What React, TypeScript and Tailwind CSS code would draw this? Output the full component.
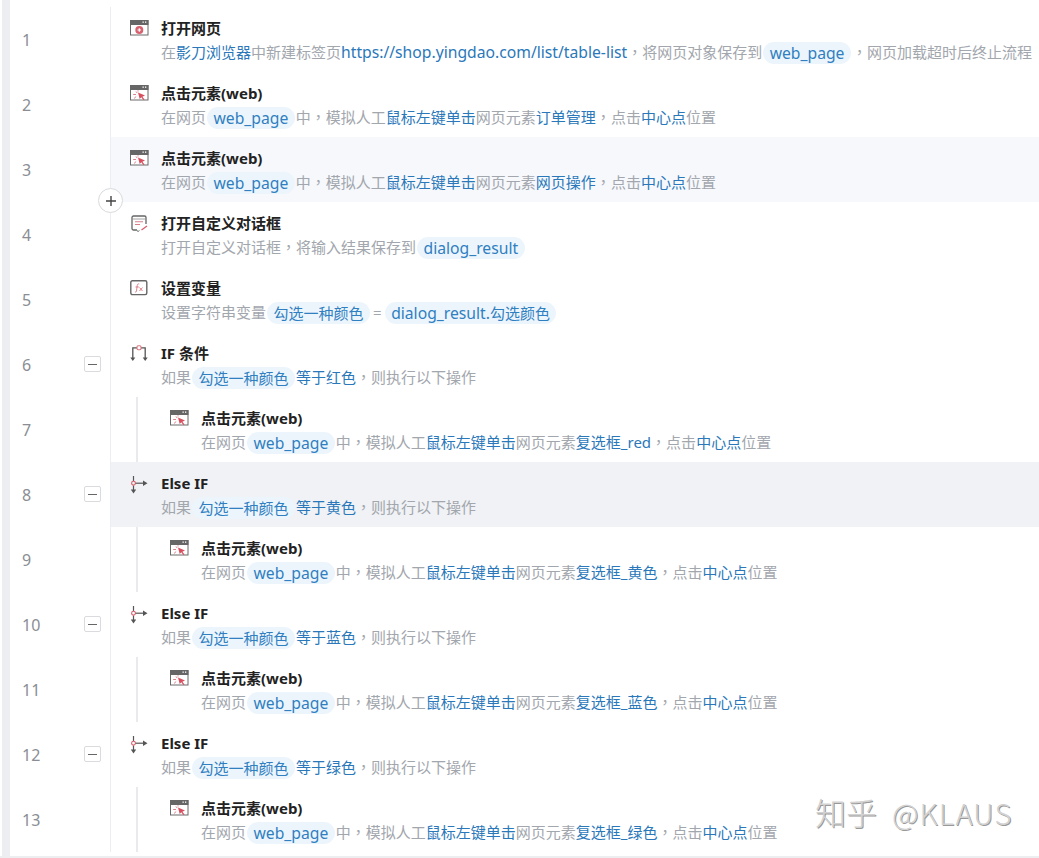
import React from "react";

type Seg = { t: string; k?: "b" | "u" | "p" };
const b = (t: string): Seg => ({ t, k: "b" });
const u = (t: string): Seg => ({ t, k: "u" });
const p = (t: string): Seg => ({ t, k: "p" });

function WinFrame({ children }: { children: React.ReactNode }) {
  return (
    <svg width="19" height="16" viewBox="0 0 19 16" fill="none">
      <rect x="0.500" y="0.500" width="17.500" height="14.500" stroke="#6a6a6a" fill="#fff" />
      <rect x="0.500" y="0.500" width="17.500" height="4" fill="#666" stroke="#666" />
      <rect x="12.500" y="1.500" width="1.300" height="1.300" fill="#fff" />
      <rect x="15" y="1.500" width="1.300" height="1.300" fill="#fff" />
      {children}
    </svg>
  );
}

function IconOpen() {
  return (
    <WinFrame>
      <circle cx="9.300" cy="10" r="4" fill="#d9606e" />
      <path d="M7.500 10h3.600M9.300 8.200v3.600" stroke="#fff" strokeWidth="1.200" />
    </WinFrame>
  );
}

function IconClick() {
  return (
    <WinFrame>
      <path d="M8 7.500l7 3-2.600 1.200 2.200 2.800-1.300.5-2-2.700-1.600 1.800z" fill="#d8505f" />
      <path d="M6 6.500l1.200 1.500M3.200 9.500h2.800M4 13.500l2.200-2M8 5.200v1.300" stroke="#d9737f" strokeWidth="0.900" />
    </WinFrame>
  );
}

function IconDialog() {
  return (
    <svg width="19" height="18" viewBox="0 0 19 18" fill="none">
      <path d="M7 15H3.500A1.500 1.500 0 0 1 2 13.500V2.500A1.500 1.500 0 0 1 3.500 1h11A1.500 1.500 0 0 1 16 2.500V9" stroke="#666" strokeWidth="1.300" />
      <path d="M2.500 4h13" stroke="#888" strokeWidth="0.800" />
      <path d="M5 6.800h8M5 9.500h5" stroke="#dc7f8b" strokeWidth="1.100" />
      <path d="M11.500 15l5.500-4" stroke="#d9606e" strokeWidth="1.300" />
      <path d="M7 15l1 2 1.500-2" stroke="#888" strokeWidth="0.900" />
    </svg>
  );
}

function IconVar() {
  return (
    <svg width="18" height="16" viewBox="0 0 18 16" fill="none">
      <rect x="0.800" y="0.800" width="16" height="13.800" rx="1.500" stroke="#666" strokeWidth="1.400" />
      <path d="M9.200 4c-1.300-.5-1.800.4-2 1.600L6.500 11c-.2 1-.8 1.200-1.500.8M5.500 7h3.300" stroke="#d9737f" strokeWidth="0.900" />
      <path d="M9.500 7.500l3 3.500M12.500 7.500l-3 3.500" stroke="#d9737f" strokeWidth="0.900" />
    </svg>
  );
}

function IconIf() {
  return (
    <svg width="18" height="18" viewBox="0 0 18 18" fill="none">
      <path d="M7 2.800H2.800V13M11 2.800h4.200V13" stroke="#555" strokeWidth="1.300" />
      <path d="M0.300 12.500h5L2.800 16zM12.700 12.500h5l-2.500 3.500z" fill="#555" />
      <rect x="7" y="0.800" width="4" height="4" rx="1.200" stroke="#d9737f" strokeWidth="1.100" fill="#fff" />
    </svg>
  );
}

function IconElse() {
  return (
    <svg width="18" height="20" viewBox="0 0 18 20" fill="none">
      <path d="M3.500 1v5M3.500 10.500V15" stroke="#555" strokeWidth="1.200" />
      <path d="M0.800 14.500h5.400L3.500 18.500z" fill="#555" />
      <circle cx="3.500" cy="8.200" r="1.900" stroke="#d9606e" strokeWidth="1.100" fill="none" />
      <path d="M5.500 8.200h8" stroke="#555" strokeWidth="1.200" />
      <path d="M13 5.500L17.500 8.200 13 11z" fill="#555" />
    </svg>
  );
}

function Plain({ t }: { t: string }) {
  const parts = t.split("，");
  return (
    <>
      {parts.map((x, i) => (
        <React.Fragment key={i}>
          {i > 0 && <span className="font-['Noto_Sans_CJK_TC']">，</span>}
          {x}
        </React.Fragment>
      ))}
    </>
  );
}

function PillText({ t }: { t: string }) {
  const m = t.match(/^([\x00-\x7f]*)(.*)$/);
  const latin = m ? m[1] : t;
  const cjk = m ? m[2] : "";
  return (
    <>
      {latin && <span className="text-[15.700px]">{latin}</span>}
      {cjk && <span className="text-[15px]">{cjk}</span>}
    </>
  );
}

function Desc({ segs }: { segs: Seg[] }) {
  return (
    <div className="flex items-center h-[24px] text-[15px] text-[#a2a6ad] whitespace-nowrap leading-[24px]">
      {segs.map((s, i) => {
        if (s.k === "p")
          return (
            <span key={i} className="mx-[1px] mt-[2px] px-[6.500px] rounded-full bg-[#edf5fc] text-[#2f7fc1] leading-[22px] h-[22px]">
              <PillText t={s.t} />
            </span>
          );
        if (s.k === "b") return <span key={i} className="text-[#2a78ba]">{s.t}</span>;
        if (s.k === "u") return <span key={i} className="text-[#2a78ba] text-[15.700px]">{s.t}</span>;
        if (s.t === "=") return <span key={i} className="mx-[2px]">=</span>;
        return <span key={i}><Plain t={s.t} /></span>;
      })}
    </div>
  );
}

type RowT = {
  icon: React.ReactNode;
  title: string;
  segs: Seg[];
  nested?: boolean;
  fold?: boolean;
  bg?: string;
  plus?: boolean;
};

const click = (name: string, nested = true, bg?: string): RowT => ({
  icon: <IconClick />,
  title: "点击元素(web)",
  nested,
  bg,
  segs: [
    { t: "在网页" },
    p("web_page"),
    { t: "中，模拟人工" },
    b("鼠标左键单击"),
    { t: "网页元素" },
    b(name),
    { t: "，点击" },
    b("中心点"),
    { t: "位置" },
  ],
});

const cond = (title: string, color: string, bg?: string, ic: React.ReactNode = <IconElse />): RowT => ({
  icon: ic,
  title,
  fold: true,
  bg,
  segs: [{ t: "如果" }, p("勾选一种颜色"), b(`等于${color}`), { t: "，则执行以下操作" }],
});

const rows: RowT[] = [
  {
    icon: <IconOpen />,
    title: "打开网页",
    segs: [
      { t: "在" },
      b("影刀浏览器"),
      { t: "中新建标签页" },
      u("https://shop.yingdao.com/list/table-list"),
      { t: "，将网页对象保存到" },
      p("web_page"),
      { t: "，网页加载超时后终止流程" },
    ],
  },
  click("订单管理", false),
  { ...click("网页操作", false, "bg-[#f6f8fc]"), plus: true },
  {
    icon: <IconDialog />,
    title: "打开自定义对话框",
    segs: [{ t: "打开自定义对话框，将输入结果保存到" }, p("dialog_result")],
  },
  {
    icon: <IconVar />,
    title: "设置变量",
    segs: [{ t: "设置字符串变量" }, p("勾选一种颜色"), { t: "=" }, p("dialog_result.勾选颜色")],
  },
  cond("IF 条件", "红色", undefined, <IconIf />),
  click("复选框_red"),
  cond("Else IF", "黄色", "bg-[#f0f2f5]"),
  click("复选框_黄色"),
  cond("Else IF", "蓝色"),
  click("复选框_蓝色"),
  cond("Else IF", "绿色"),
  click("复选框_绿色"),
];

function Row({ r, n }: { r: RowT; n: number }) {
  return (
    <div className="flex h-[65px]">
      <div className="relative w-[101px] shrink-0 flex items-center border-r border-[#eceef1]">
        <span className="pl-[12px] text-[16px] text-[#8a8e94]">{n}</span>
        {r.fold && (
          <span className="absolute left-[74px] top-[24px] w-[17px] h-[16px] border border-[#d9dbde] rounded-[2px] bg-white flex items-center justify-center">
            <span className="w-[9px] h-[1px] bg-[#666]" />
          </span>
        )}
        {r.plus && (
          <span className="absolute left-[88px] top-[51px] z-10 w-[25px] h-[25px] rounded-full border border-[#d8dadd] bg-white flex items-center justify-center">
            <svg width="12" height="12" viewBox="0 0 12 12"><path d="M6 1v10M1 6h10" stroke="#444" strokeWidth="1.400" /></svg>
          </span>
        )}
      </div>
      <div className={`flex-1 min-w-0 flex overflow-hidden ${r.bg ?? ""}`}>
        {r.nested && <div className="ml-[25px] w-[2px] bg-[#e8eaed] shrink-0 mr-[32px]" />}
        <div className={`shrink-0 pt-[13px] flex w-[31px] ${r.nested ? "" : "ml-[19px]"}`}>{r.icon}</div>
        <div className="pt-[9px] flex-1 min-w-0">
          <div className="h-[24px] text-[15px] leading-[24px] font-bold text-[#222] whitespace-nowrap">{r.title}</div>
          <Desc segs={r.segs} />
        </div>
      </div>
    </div>
  );
}

export default function App() {
  return (
    <div
      className="relative flex flex-col w-[1039px] h-[858px] bg-white overflow-hidden font-['Noto_Sans','Noto_Sans_CJK_SC',sans-serif]"
    >
      <div className="flex flex-1 min-h-0">
        <div className="w-[10px] shrink-0 pl-[2px] bg-white flex">
          <div className="w-full bg-[#eceef2]" />
        </div>
        <div className="flex-1 min-w-0 pt-[7px]">
          {rows.map((r, i) => (
            <Row key={i} r={r} n={i + 1} />
          ))}
        </div>
      </div>
      <div className="h-[2px] bg-[#eceef0]" />
      <div className="absolute left-[815px] top-[791px] flex items-center leading-[42px] text-[#d2d2d2] whitespace-nowrap font-light [text-shadow:1px_1px_0_#999] font-['Noto_Sans_CJK_SC','Noto_Sans',sans-serif]">
        <span className="text-[31px]">知乎</span>
        <span className="ml-[15px] text-[29px] tracking-[1.200px]">@KLAUS</span>
      </div>
    </div>
  );
}
